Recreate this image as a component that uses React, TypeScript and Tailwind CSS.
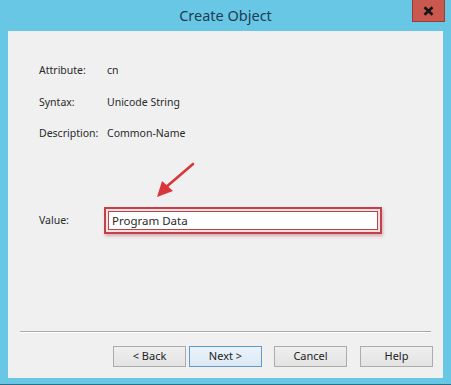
const fields = [
  { label: "Attribute:", value: "cn" },
  { label: "Syntax:", value: "Unicode String" },
  { label: "Description:", value: "Common-Name" },
];

const buttons = [
  { label: "< Back", primary: false, ml: "ml-0" },
  { label: "Next >", primary: true, ml: "ml-[3px]" },
  { label: "Cancel", primary: false, ml: "ml-[12px]" },
  { label: "Help", primary: false, ml: "ml-[13px]" },
];

export default function App() {
  return (
    <div
      className="relative flex h-[385px] w-[451px] flex-col bg-[#69c7e6] text-[#2a2a2a]"
      style={{ fontFamily: '"Noto Sans", "Open Sans", Arial, sans-serif' }}
    >
      {/* title bar */}
      <div className="relative flex h-[31px] items-center justify-center">
        <span className="mt-[1px] text-[14.5px] text-[#1d3b52]">Create Object</span>
        <div className="absolute right-[6px] top-0 flex h-[22px] w-[33px] items-center justify-center border border-t-0 border-[#9a3b38] bg-[#c9584f]">
          <svg width="11" height="10" viewBox="0 0 11 10" aria-hidden="true">
            <path d="M1.5 1.2L9.5 8.8M9.5 1.2L1.5 8.8" stroke="#161616" strokeWidth="2.6" />
          </svg>
        </div>
      </div>

      {/* body */}
      <div className="relative mx-[8px] mb-[6px] flex flex-1 flex-col bg-[#f0f0f0] text-[10.5px]">
        <div className="flex flex-col gap-[15.5px] pl-[31px] pt-[32px]">
          {fields.map((f) => (
            <div key={f.label} className="flex h-[16px] items-center">
              <span className="w-[68px]">{f.label}</span>
              <span>{f.value}</span>
            </div>
          ))}
        </div>

        <div className="mt-[65px] flex items-center pl-[31px]">
          <span className="w-[65px]">Value:</span>
          <div className="h-[27px] w-[278px] border-[2px] border-[#c2424b] bg-[#f4dfe1] p-[2px] shadow-[1px_2px_3px_rgba(190,90,95,0.45)]">
            <div className="flex h-full items-center border border-[#b8444a] bg-white pl-[3px] text-[11.5px]">
              Program Data
            </div>
          </div>
        </div>

        {/* annotation arrow */}
        <svg
          className="absolute left-[147px] top-[131px]"
          width="42"
          height="38"
          viewBox="0 0 42 38"
          aria-hidden="true"
        >
          <path d="M38 2L10 26" stroke="#d9353a" strokeWidth="2.6" strokeLinecap="round" />
          <path d="M2 35L7 19L18 29Z" fill="#d9353a" />
        </svg>

        <div className="mx-[12px] mt-[97px] h-[2px] border-t border-b border-t-[#a8a8a8] border-b-white" />

        <div className="mt-[13px] flex pl-[105px]">
          {buttons.map((b) => (
            <div
              key={b.label}
              className={`${b.ml} flex h-[21px] w-[73px] items-center justify-center border bg-gradient-to-b text-[11px] text-[#222] ${
                b.primary
                  ? "border-[#5f9bcf] from-[#eaf3fb] to-[#dce8f3]"
                  : "border-[#acacac] from-[#efefef] to-[#e3e3e3]"
              }`}
            >
              {b.label}
            </div>
          ))}
        </div>
      </div>
      <div className="h-[1px] bg-[#2c6f8a]" />
    </div>
  );
}
